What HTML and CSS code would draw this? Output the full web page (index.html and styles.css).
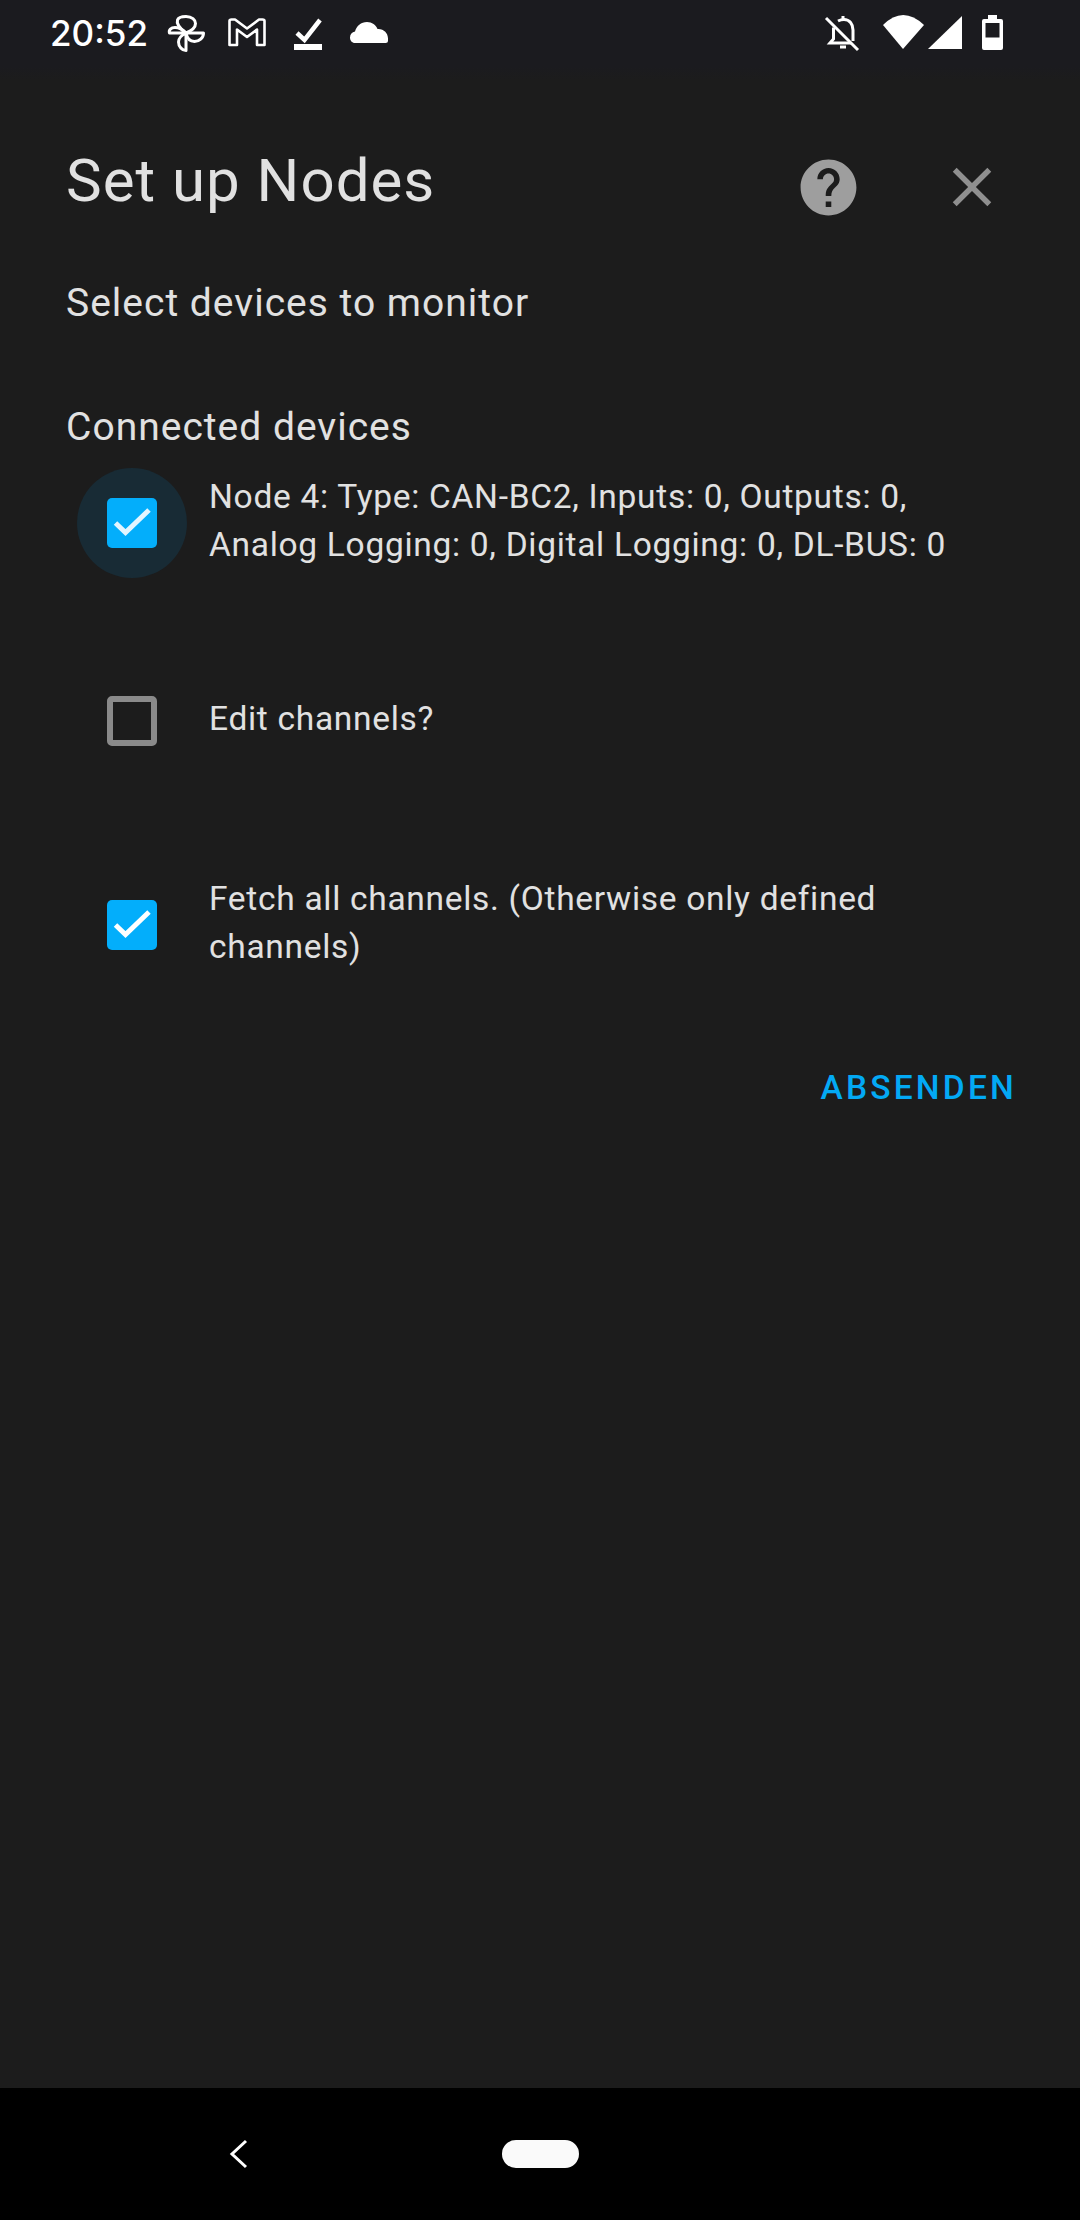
FILE: index.html
```html
<!DOCTYPE html>
<html lang="en">
<head>
    <meta charset="UTF-8">
    <meta name="viewport" content="width=device-width, initial-scale=1.0">
    <title>Set up Nodes</title>
    <link rel="stylesheet" href="styles.css">
</head>
<body>
    <header class="status-bar">
        <div class="status-left">
            <span class="clock">20:52</span>
            <svg class="status-icon" viewBox="0 0 42 42" fill="none" stroke="#fff" stroke-width="3" stroke-linejoin="round">
                <path d="M21 21C14 16 11.500 11 12.500 8C13.500 5 17 4.500 21 4.500C27 4.500 30.500 8 30.500 11.500C30.500 16 26 19 21 21Z"/>
                <path d="M21 21H38.500C38.500 26 34 29.500 29.500 29.500C25 29.500 22 26 21 21Z"/>
                <path d="M21 21V38.500C17.500 38.500 13.500 35 13.500 30C13.500 26 17 23 21 21Z"/>
                <path d="M21 21H4.500C3.500 18 6 15.500 10 15.500C14 15.500 18 18 21 21Z"/>
            </svg>
            <svg class="status-icon" viewBox="0 0 42 42" fill="none" stroke="#fff" stroke-width="2.600" stroke-linejoin="round">
                <path d="M3.500 33V9Q3.500 7.500 5.500 7.500H9L21 16.500L33 7.500H36.500Q38.500 7.500 38.500 9V33H31V17.500L21 25L11 17.500V33Z"/>
            </svg>
            <svg class="status-icon" viewBox="0 0 42 42" fill="none" stroke="#fff" stroke-width="4.500">
                <polyline points="10,21 17.500,28 33,8"/>
                <rect x="7" y="32" width="28" height="6" fill="#fff" stroke="none"/>
            </svg>
            <svg class="status-icon" viewBox="0 0 42 42" fill="#fff">
                <path d="M7 31C4 31 2 28.500 2 25.500C2 22.500 4 20 7 19.500C8.500 14 13 10 19 10C24 10 28 13 29.500 17C35.500 16.500 40 21 40 26.500V28.500Q40 31 37.500 31Z"/>
            </svg>
        </div>
        <div class="status-right">
            <svg class="status-icon" viewBox="0 0 42 42" fill="none" stroke="#fff" stroke-width="3">
                <path d="M18 9C20 8 22 7.500 24 7.500C29.500 7.500 33 12 33 18V29M13.500 15.500V27L10 31H31"/>
                <path d="M6 6L38 38"/>
                <path d="M23 4V8M20 35H26"/>
            </svg>
            <svg class="status-icon wifi" viewBox="0 0 42 42" fill="#fff">
                <path d="M1 13Q21 -7 42 13L21 37Z"/>
            </svg>
            <svg class="status-icon" viewBox="0 0 42 42" fill="#fff">
                <path d="M4 37L38 4V37Z"/>
            </svg>
            <svg class="status-icon battery" viewBox="0 0 42 42" fill="#fff">
                <path fill-rule="evenodd" d="M17 3H26V7H30Q32 7 32 9V36Q32 38 30 38H13Q11 38 11 36V9Q11 7 13 7H17ZM14.500 11V25.500H28.500V11Z"/>
            </svg>
        </div>
    </header>

    <main class="dialog">
        <div class="dialog-head">
            <h1>Set up Nodes</h1>
            <svg class="help-icon" viewBox="0 0 24 24">
                <path d="M12 2C6.480 2 2 6.480 2 12s4.480 10 10 10 10-4.480 10-10S17.520 2 12 2zm1 17h-2v-2h2v2zm2.070-7.750l-.9.920C13.450 12.900 13 13.500 13 15h-2v-.5c0-1.100.45-2.100 1.170-2.830l1.240-1.260c.37-.36.59-.86.59-1.410 0-1.100-.9-2-2-2s-2 .9-2 2H8c0-2.210 1.790-4 4-4s4 1.790 4 4c0 .88-.36 1.680-.93 2.250z"/>
            </svg>
            <svg class="close-icon" viewBox="0 0 24 24">
                <path d="M19 6.410L17.590 5 12 10.590 6.410 5 5 6.410 10.590 12 5 17.590 6.410 19 12 13.410 17.590 19 19 17.590 13.410 12z"/>
            </svg>
        </div>

        <p class="subtitle">Select devices to monitor</p>
        <h2 class="section-title">Connected devices</h2>

        <label class="check-row first">
            <span class="check-cell focused">
                <span class="checkbox checked">
                    <svg viewBox="0 0 50 50"><polyline points="8.500,25 18.500,34.500 42,12"/></svg>
                </span>
            </span>
            <span class="check-text">Node 4: Type: CAN-BC2, Inputs: 0, Outputs: 0, Analog Logging: 0, Digital Logging: 0, DL-BUS: 0</span>
        </label>

        <label class="check-row">
            <span class="check-cell">
                <span class="checkbox"></span>
            </span>
            <span class="check-text">Edit channels?</span>
        </label>

        <label class="check-row last">
            <span class="check-cell">
                <span class="checkbox checked">
                    <svg viewBox="0 0 50 50"><polyline points="8.500,25 18.500,34.500 42,12"/></svg>
                </span>
            </span>
            <span class="check-text">Fetch all channels. (Otherwise only defined channels)</span>
        </label>

        <div class="dialog-actions">
            <button type="button" class="submit-btn">ABSENDEN</button>
        </div>
    </main>

    <footer class="nav-bar">
        <svg class="nav-back" viewBox="0 0 24 30" fill="none" stroke="#fff" stroke-width="3">
            <polyline points="20,2 6,15 20,28"/>
        </svg>
        <span class="nav-pill"></span>
    </footer>
</body>
</html>
```

FILE: styles.css
```css
/* General Styles */
* {
    box-sizing: border-box;
}

body {
    font-family: Roboto, "Liberation Sans", sans-serif;
    margin: 0;
    width: 1080px;
    height: 2220px;
    display: flex;
    flex-direction: column;
    background: linear-gradient(#1b1b1f 66px, #1c1c1c 80px);
    color: #e1e1e1;
}

/* Status bar */
.status-bar {
    height: 66px;
    flex: none;
    display: flex;
    justify-content: space-between;
    align-items: center;
    padding: 0 67px 0 50px;
}

.status-left,
.status-right {
    display: flex;
    align-items: center;
}

.status-left {
    gap: 19px;
}

.clock {
    width: 96px;
    font-family: Inter, Roboto, sans-serif;
    font-size: 35px;
    font-weight: 500;
    white-space: nowrap;
    color: #fff;
}

.status-icon {
    width: 42px;
    height: 42px;
    flex: none;
}

.status-right .wifi {
    margin-left: 20px;
}

.status-right .battery {
    margin-left: 5px;
}

/* Dialog */
.dialog {
    flex: 1;
    padding: 0 66px;
}

.dialog-head {
    display: flex;
    align-items: center;
    height: 76px;
    margin-top: 76px;
}

.dialog-head h1 {
    flex: 1;
    margin: 0;
    font-size: 60px;
    font-weight: 400;
    letter-spacing: 1px;
}

.help-icon {
    width: 67px;
    height: 67px;
    margin-top: 14px;
    fill: #9e9e9e;
}

.close-icon {
    width: 66px;
    height: 66px;
    margin: 14px 9px 0 77px;
    fill: #8f8f8f;
}

.subtitle {
    margin: 63px 0 0;
    font-size: 39px;
    line-height: 44px;
    letter-spacing: 1px;
}

.section-title {
    margin: 80px 0 0;
    font-size: 39px;
    font-weight: 400;
    line-height: 44px;
    letter-spacing: 1px;
}

.check-row {
    display: flex;
    align-items: center;
    gap: 22px;
    margin: 20px 0 87px 11px;
}

.check-row.first {
    margin: 19px 0 88px 11px;
}

.check-row.last {
    margin-top: 94px;
}

.check-cell {
    width: 110px;
    height: 110px;
    flex: none;
    display: flex;
    align-items: center;
    justify-content: center;
    border-radius: 50%;
}

.check-cell.focused {
    background-color: #182b35;
}

.checkbox {
    width: 50px;
    height: 50px;
    border: 6px solid #8a8a8a;
    border-radius: 5px;
}

.checkbox.checked {
    border: none;
    background-color: #03aefb;
}

.checkbox svg {
    display: block;
    fill: none;
    stroke: #fff;
    stroke-width: 5;
}

.focused .checkbox svg {
    stroke: #e3f5ff;
}

.check-text {
    padding-bottom: 4px;
    font-size: 33.500px;
    line-height: 48.500px;
    letter-spacing: 0.7px;
}

.dialog-actions {
    display: flex;
    justify-content: flex-end;
    margin-right: -3px;
    padding-top: 1px;
}

.submit-btn {
    padding: 0;
    background: none;
    border: none;
    font-family: inherit;
    font-size: 33.500px;
    font-weight: 500;
    letter-spacing: 3.200px;
    color: #03a9f4;
}

/* Navigation bar */
.nav-bar {
    height: 132px;
    flex: none;
    position: relative;
    display: flex;
    align-items: center;
    justify-content: center;
    background-color: #000;
}

.nav-pill {
    width: 77px;
    height: 28px;
    border-radius: 14px;
    background-color: #fafafa;
}

.nav-back {
    position: absolute;
    left: 226px;
    top: 51px;
    width: 24px;
    height: 30px;
}
```
